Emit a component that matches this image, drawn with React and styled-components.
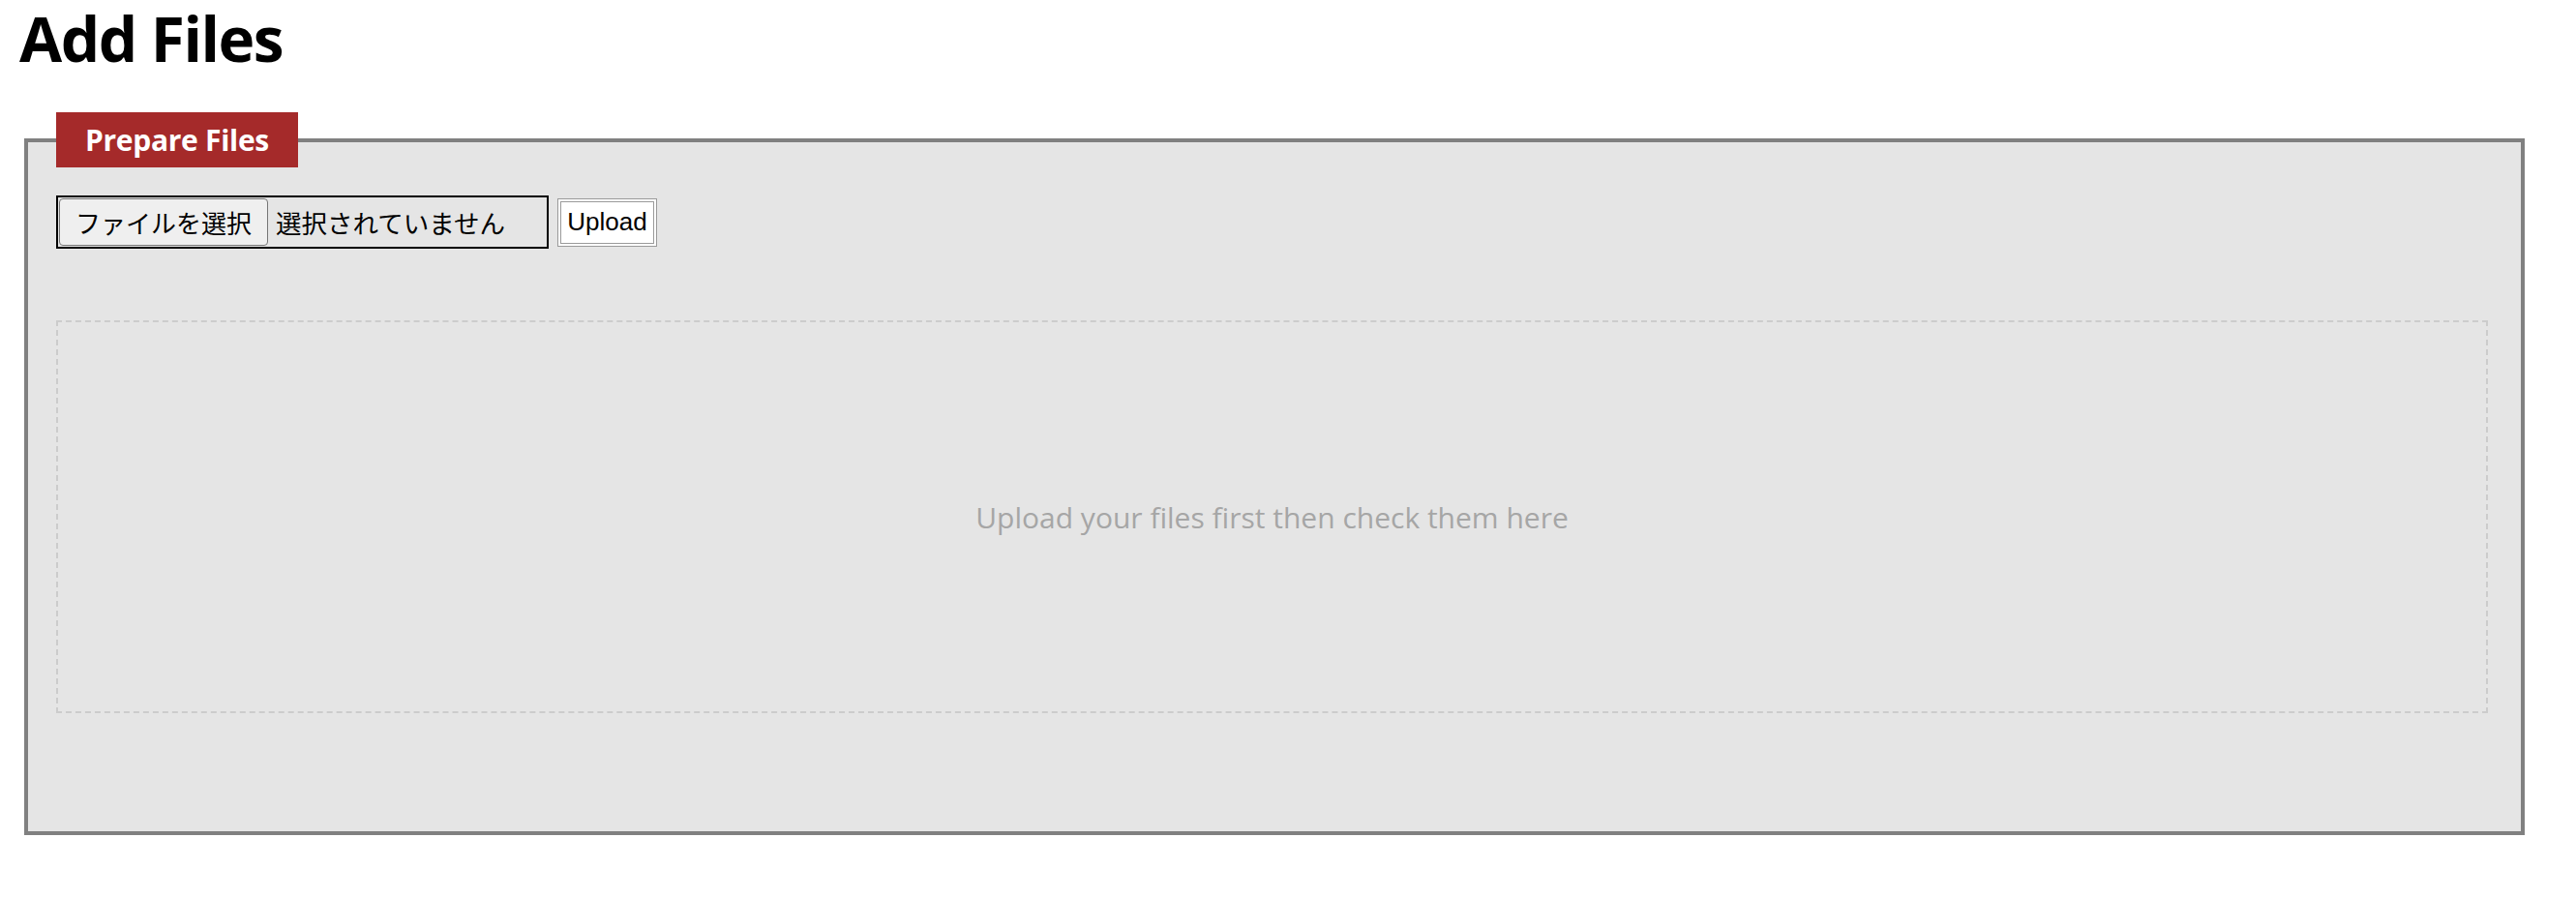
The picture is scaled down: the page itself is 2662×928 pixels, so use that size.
import styled, { createGlobalStyle } from "styled-components";

const GlobalStyle = createGlobalStyle`
	html, body {
		margin: 0;
		padding: 0;
		background: #ffffff;
	}
	body {
		font-family: "Open Sans", "Noto Sans", sans-serif;
		color: #000;
	}
`;

const App = () => {
	return (
		<Page>
			<GlobalStyle />
			<Title>Add Files</Title>
			<Panel>
				<Legend>Prepare Files</Legend>
				<UploadRow>
					<FileBox>
						<ChooseButton type="button">ファイルを選択</ChooseButton>
						<FileStatus>選択されていません</FileStatus>
					</FileBox>
					<UploadButton type="button">Upload</UploadButton>
				</UploadRow>
				<DropZone>
					<Placeholder>Upload your files first then check them here</Placeholder>
				</DropZone>
			</Panel>
		</Page>
	);
};

export default App;

const Page = styled.div`
	padding: 0 53px 0 20px;
`;

const Title = styled.h1`
	margin: 8px 0 0 0;
	font-family: "Open Sans", "Noto Sans", sans-serif;
	font-size: 64px;
	line-height: 64px;
	font-weight: 700;
	letter-spacing: -1.5px;
`;

const Panel = styled.fieldset`
	margin: 44px 0 0 5px;
	min-width: 0;
	border: 4px solid #808080;
	background-color: #e5e5e5;
	padding: 29px 34px 122px 29px;
`;

const Legend = styled.legend`
	background-color: #a52a2a;
	color: #ffffff;
	font-family: "Open Sans", "Noto Sans", sans-serif;
	font-weight: 700;
	font-size: 30px;
	letter-spacing: -0.3px;
	line-height: 57px;
	height: 57px;
	padding: 0 30px;
	box-sizing: border-box;
`;

const UploadRow = styled.div`
	display: flex;
	align-items: center;
`;

const FileBox = styled.div`
	display: flex;
	align-items: center;
	box-sizing: border-box;
	width: 509px;
	height: 55px;
	border: 2px solid #000000;
`;

const ChooseButton = styled.button`
	box-sizing: border-box;
	height: 49px;
	margin-left: 1px;
	padding: 0 16px;
	border: 1px solid #767676;
	border-radius: 4px;
	background-color: #efefef;
	color: #000;
	font-family: "Noto Sans CJK JP", sans-serif;
	font-size: 26px;
	line-height: 1;
`;

const FileStatus = styled.span`
	margin-left: 8px;
	font-family: "Noto Sans CJK JP", sans-serif;
	font-size: 26.5px;
	color: #000;
`;

const UploadButton = styled.button`
	box-sizing: border-box;
	height: 50px;
	width: 103px;
	margin-left: 9px;
	padding: 0;
	border: 4px double #9a9a9a;
	background-color: #ffffff;
	color: #000;
	font-family: "Liberation Sans", Arial, sans-serif;
	font-size: 26px;
`;

const DropZone = styled.div`
	box-sizing: border-box;
	margin-top: 74px;
	height: 406px;
	border: 2px dashed #cccccc;
	display: flex;
	align-items: center;
	justify-content: center;
`;

const Placeholder = styled.span`
	font-family: "Open Sans", "Noto Sans", sans-serif;
	font-size: 30px;
	color: #a6a6a6;
`;
